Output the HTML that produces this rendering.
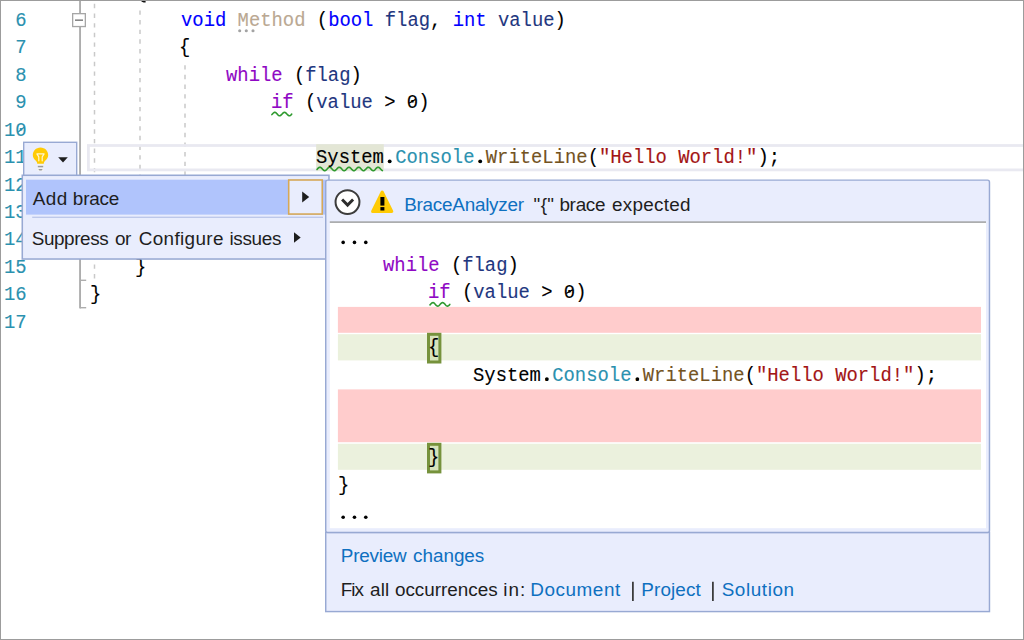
<!DOCTYPE html>
<html>
<head>
<meta charset="utf-8">
<title>Add brace</title>
<style>
html,body{margin:0;padding:0;}
body{width:1024px;height:640px;position:relative;overflow:hidden;background:#fff;font-family:"Liberation Sans",sans-serif;}
.abs{position:absolute;}
svg.layer{position:absolute;left:0;top:0;}
.mono{font-family:"Liberation Mono",monospace;font-size:20.5px;line-height:27px;white-space:pre;color:#000;transform:scaleX(0.9199);transform-origin:0 0;-webkit-text-stroke:0.12px currentColor;}
.ln{position:absolute;left:0;width:26.6px;text-align:right;color:#2b91af;height:27px;transform-origin:100% 0;}
.cl{position:absolute;height:27px;}
.kw{color:#0000ff;}
.ck{color:#8f08c4;}
.ty{color:#2b91af;}
.fn{color:#74531f;}
.st{color:#a31515;}
.id{color:#1f377f;}
.fade{color:#baa892;}
.ui{font-family:"Liberation Sans",sans-serif;font-size:18.9px;color:#1e1e1e;white-space:pre;position:absolute;line-height:22px;}
.lnk{color:#0e70c0;}
</style>
</head>
<body>

<!-- editor shapes -->
<svg class="layer" width="1024" height="640" viewBox="0 0 1024 640">
<rect x="79.1" y="0" width="1.9" height="308.4" fill="#adadad"/>
<rect x="80" y="279.6" width="6.2" height="1.4" fill="#adadad"/>
<rect x="80" y="307" width="6.2" height="1.4" fill="#adadad"/>
<rect x="72.65" y="13.65" width="12.7" height="12.9" fill="#fff" stroke="#a6a6a6" stroke-width="1.3"/>
<rect x="75" y="19.5" width="8" height="1.3" fill="#6a6a6a"/>
<line x1="94.5" y1="3.85" x2="94.5" y2="279.5" stroke="#c9c9c9" stroke-width="1.5" stroke-dasharray="4.4 5.25"/>
<line x1="140" y1="10.4" x2="140" y2="259" stroke="#c9c9c9" stroke-width="1.5" stroke-dasharray="4.4 5.25"/>
<line x1="185" y1="65.2" x2="185" y2="259" stroke="#c9c9c9" stroke-width="1.5" stroke-dasharray="4.4 5.25"/>
<rect x="88.4" y="145.5" width="940.2" height="24.4" fill="none" stroke="#e9e9f1" stroke-width="2.8"/>
<rect x="316.15" y="144.2" width="67.65" height="26.55" fill="#e3e6d5"/>
<path d="M141.3 -2 Q141.3 1.6 145.6 1.6" fill="none" stroke="#111" stroke-width="2"/>
<circle cx="239.7" cy="30.8" r="1.55" fill="#a3a3a3"/>
<circle cx="246.3" cy="30.8" r="1.55" fill="#a3a3a3"/>
<circle cx="253" cy="30.8" r="1.55" fill="#a3a3a3"/>
<path d="M271.90 114.58 L272.50 113.91 L273.10 113.26 L273.70 112.73 L274.30 112.39 L274.90 112.30 L275.50 112.48 L276.10 112.88 L276.70 113.47 L277.30 114.13 L277.90 114.79 L278.50 115.34 L279.10 115.69 L279.70 115.80 L280.30 115.65 L280.90 115.26 L281.50 114.69 L282.10 114.02 L282.70 113.36 L283.30 112.80 L283.90 112.43 L284.50 112.30 L285.10 112.43 L285.70 112.80 L286.30 113.36 L286.90 114.02 L287.50 114.69 L288.10 115.26 L288.70 115.65 L289.30 115.80 L289.90 115.69 L290.50 115.34 L291.10 114.79 L291.70 114.13" fill="none" stroke="#2f9a2f" stroke-width="1.6" stroke-linecap="round" stroke-linejoin="round"/>
<line x1="409" y1="103.2" x2="415.7" y2="99.3" stroke="#000" stroke-width="1.3"/>
<path d="M317.00 169.48 L317.60 168.81 L318.20 168.16 L318.80 167.63 L319.40 167.29 L320.00 167.20 L320.60 167.38 L321.20 167.78 L321.80 168.37 L322.40 169.03 L323.00 169.69 L323.60 170.24 L324.20 170.59 L324.80 170.70 L325.40 170.55 L326.00 170.16 L326.60 169.59 L327.20 168.92 L327.80 168.26 L328.40 167.70 L329.00 167.33 L329.60 167.20 L330.20 167.33 L330.80 167.70 L331.40 168.26 L332.00 168.92 L332.60 169.59 L333.20 170.16 L333.80 170.55 L334.40 170.70 L335.00 170.59 L335.60 170.24 L336.20 169.69 L336.80 169.03 L337.40 168.37 L338.00 167.78 L338.60 167.38 L339.20 167.20 L339.80 167.29 L340.40 167.63 L341.00 168.16 L341.60 168.81 L342.20 169.48 L342.80 170.07 L343.40 170.50 L344.00 170.69 L344.60 170.63 L345.20 170.31 L345.80 169.79 L346.40 169.15 L347.00 168.47 L347.60 167.87 L348.20 167.43 L348.80 167.21 L349.40 167.26 L350.00 167.55 L350.60 168.06 L351.20 168.70 L351.80 169.37 L352.40 169.98 L353.00 170.44 L353.60 170.68 L354.20 170.66 L354.80 170.38 L355.40 169.89 L356.00 169.26 L356.60 168.58 L357.20 167.96 L357.80 167.49 L358.40 167.23 L359.00 167.23 L359.60 167.49 L360.20 167.96 L360.80 168.58 L361.40 169.26 L362.00 169.89 L362.60 170.38 L363.20 170.66 L363.80 170.68 L364.40 170.44 L365.00 169.98 L365.60 169.37 L366.20 168.70 L366.80 168.06 L367.40 167.55 L368.00 167.26 L368.60 167.21 L369.20 167.43 L369.80 167.87 L370.40 168.47 L371.00 169.15 L371.60 169.79 L372.20 170.31 L372.80 170.63 L373.40 170.69 L374.00 170.50 L374.60 170.07 L375.20 169.48 L375.80 168.81 L376.40 168.16 L377.00 167.63 L377.60 167.29 L378.20 167.20 L378.80 167.38 L379.40 167.78 L380.00 168.37 L380.60 169.03 L381.20 169.69 L381.80 170.24 L382.40 170.59" fill="none" stroke="#2f9a2f" stroke-width="1.6" stroke-linecap="round" stroke-linejoin="round"/>
<circle cx="389.7" cy="161.3" r="1.85" fill="#000"/>
<circle cx="480.2" cy="161.3" r="1.85" fill="#000"/>
</svg>

<!-- line numbers -->
<div class="mono ln" style="top:6.83px">6</div>
<div class="mono ln" style="top:34.28px">7</div>
<div class="mono ln" style="top:61.73px">8</div>
<div class="mono ln" style="top:89.18px">9</div>
<div class="mono ln" style="top:116.63px">10</div>
<div class="mono ln" style="top:144.08px">11</div>
<div class="mono ln" style="top:171.53px">12</div>
<div class="mono ln" style="top:198.98px">13</div>
<div class="mono ln" style="top:226.43px">14</div>
<div class="mono ln" style="top:253.88px">15</div>
<div class="mono ln" style="top:281.33px">16</div>
<div class="mono ln" style="top:308.78px">17</div>

<!-- code -->
<div class="mono cl" style="left:180.5px;top:6.83px"><span class="kw">void</span> <span class="fade">Method</span> (<span class="kw">bool</span> <span class="id">flag</span>, <span class="kw">int</span> <span class="id">value</span>)</div>
<div class="mono cl" style="left:179px;top:34.28px">{</div>
<div class="mono cl" style="left:225.76px;top:61.73px"><span class="ck">while</span> (<span class="id">flag</span>)</div>
<div class="mono cl" style="left:271.02px;top:89.18px"><span class="ck">if</span> (<span class="id">value</span> &gt; 0)</div>
<div class="mono cl" style="left:316.28px;top:144.08px">System.<span class="ty">Console</span>.<span class="fn">WriteLine</span>(<span class="st">"Hello World!"</span>);</div>
<div class="mono cl" style="left:135.24px;top:253.88px">}</div>
<div class="mono cl" style="left:89.98px;top:281.33px">}</div>

<!-- popup shapes: lightbulb button, menu, preview panel -->
<svg class="layer" width="1024" height="640" viewBox="0 0 1024 640">
<line x1="17.9" y1="132.3" x2="24.4" y2="127" stroke="#2b91af" stroke-width="1.3"/>
<rect x="23.7" y="142.29999999999998" width="53.0" height="35.0" fill="#e9edfd" stroke="#98a9d3" stroke-width="1.4"/>
<rect x="22.275" y="175.275" width="306.7" height="83.75" fill="#e9edfd" stroke="#98a9d3" stroke-width="1.55"/>
<rect x="26" y="179.7" width="300" height="34.9" fill="#b0c4fc"/>
<rect x="288.7" y="180.0" width="33.55" height="34.05" fill="#e9edfd" stroke="#d6a858" stroke-width="1.6"/>
<rect x="32.2" y="216.6" width="290.8" height="1.4" fill="#bdc8ea"/>
<path d="M302.2 191.6 L309.2 197.1 L302.2 202.6 Z" fill="#1e1e1e"/>
<path d="M294 232.3 L300.7 237.5 L294 242.7 Z" fill="#1e1e1e"/>
<g transform="translate(31,146)">
  <rect x="6.5" y="17.5" width="6" height="7.6" fill="#f3f3f3"/>
  <path d="M9.5 1.4 C4.9 1.4 1.8 5 1.8 9 C1.8 11.6 3.2 13.2 4.6 14.6 C5.6 15.6 6.2 16.5 6.2 17.8 L12.8 17.8 C12.8 16.5 13.4 15.6 14.4 14.6 C15.8 13.2 17.2 11.6 17.2 9 C17.2 5 14.1 1.4 9.5 1.4 Z" fill="#ffcb05"/>
  <path d="M7.8 14.8 L7.8 10.8 L5.9 7.9 L13.1 7.9 L11.2 10.8 L11.2 14.8" fill="none" stroke="#fff6d2" stroke-width="1.2" stroke-linecap="round" stroke-linejoin="round"/>
  <rect x="6.8" y="19.8" width="5.4" height="1.5" fill="#9a9a9a"/>
  <path d="M7.4 23 L11.6 23 L10.6 24.5 L8.4 24.5 Z" fill="#9a9a9a"/>
</g>
<path d="M58.2 157.3 L67.8 157.3 L63 162.5 Z" fill="#1e1e1e"/>
<rect x="325.725" y="532.4250000000001" width="663.75" height="79.15" fill="#e9edfd" stroke="#98a9d3" stroke-width="1.45"/>
<rect x="325.725" y="180.125" width="663.75" height="352.35" fill="#e9edfd" stroke="#98a9d3" stroke-width="1.45" rx="2"/>
<rect x="329.8" y="221.4" width="656.2" height="1.5" fill="#9c9c9c"/>
<rect x="329.8" y="222.9" width="656.2" height="305.3" fill="#fff"/>
<circle cx="347.5" cy="202.1" r="11.95" fill="#fff" stroke="#3c3c3c" stroke-width="2"/>
<path d="M342.1 199.4 L347.6 205.1 L353.1 199.4" fill="none" stroke="#2d2d2d" stroke-width="2.9"/>
<path d="M382.2 192 L391.8 211.5 L372.6 211.5 Z" fill="#ffcb05" stroke="#ffcb05" stroke-width="3" stroke-linejoin="round"/>
<rect x="380.4" y="197" width="4.0" height="8.6" fill="#000"/>
<rect x="380.4" y="207.1" width="4.0" height="3.4" fill="#000"/>
<rect x="337.9" y="306.9" width="643.1" height="25.9" fill="#ffcccc"/>
<rect x="337.9" y="334.2" width="643.1" height="26.2" fill="#ebf1dd"/>
<rect x="337.9" y="389.4" width="643.1" height="52.8" fill="#ffcccc"/>
<rect x="337.9" y="443.75" width="643.1" height="26.05" fill="#ebf1dd"/>
<rect x="428.5" y="334.3" width="11.4" height="27.7" fill="#d7e3bc" stroke="#76923c" stroke-width="3"/>
<rect x="428.5" y="444.3" width="11.4" height="27.6" fill="#d7e3bc" stroke="#76923c" stroke-width="3"/>
<circle cx="343.16" cy="242.40" r="1.8" fill="#000"/><circle cx="354.48" cy="242.40" r="1.8" fill="#000"/><circle cx="365.79" cy="242.40" r="1.8" fill="#000"/>
<circle cx="343.16" cy="517.20" r="1.8" fill="#000"/><circle cx="354.48" cy="517.20" r="1.8" fill="#000"/><circle cx="365.79" cy="517.20" r="1.8" fill="#000"/>
<circle cx="546.9" cy="379.1" r="1.85" fill="#000"/>
<circle cx="637.4" cy="379.1" r="1.85" fill="#000"/>
<path d="M430.00 304.88 L430.60 304.21 L431.20 303.56 L431.80 303.03 L432.40 302.69 L433.00 302.60 L433.60 302.78 L434.20 303.18 L434.80 303.77 L435.40 304.43 L436.00 305.09 L436.60 305.64 L437.20 305.99 L437.80 306.10 L438.40 305.95 L439.00 305.56 L439.60 304.99 L440.20 304.32 L440.80 303.66 L441.40 303.10 L442.00 302.73 L442.60 302.60 L443.20 302.73 L443.80 303.10 L444.40 303.66 L445.00 304.32 L445.60 304.99 L446.20 305.56 L446.80 305.95 L447.40 306.10 L448.00 305.99 L448.60 305.64 L449.20 305.09 L449.80 304.43" fill="none" stroke="#2f9a2f" stroke-width="1.6" stroke-linecap="round" stroke-linejoin="round"/>
<line x1="632.9" y1="581.7" x2="632.9" y2="601" stroke="#333" stroke-width="1.7"/>
<line x1="712.9" y1="581.7" x2="712.9" y2="601" stroke="#333" stroke-width="1.7"/>
<line x1="566.2" y1="293.5" x2="572.9" y2="289.6" stroke="#000" stroke-width="1.3"/>
</svg>

<!-- menu text -->
<div class="ui" style="left:32.7px;top:187.9px;letter-spacing:0.47px;">Add</div>
<div class="ui" style="left:72.8px;top:187.9px;letter-spacing:-0.17px;">brace</div>
<div class="ui" style="left:31.8px;top:228.4px;letter-spacing:-0.43px;">Suppress</div>
<div class="ui" style="left:115.0px;top:228.4px;letter-spacing:-0.42px;">or</div>
<div class="ui" style="left:138.7px;top:228.4px;letter-spacing:0.36px;">Configure</div>
<div class="ui" style="left:229.4px;top:228.4px;letter-spacing:-0.3px;">issues</div>

<!-- preview header text -->
<div class="ui lnk" style="left:404.2px;top:194.2px;letter-spacing:-0.25px;">BraceAnalyzer</div>
<div class="ui" style="left:533.6px;top:194.2px;letter-spacing:0.34px;">"{"</div>
<div class="ui" style="left:559.4px;top:194.2px;letter-spacing:-0.28px;">brace</div>
<div class="ui" style="left:612.0px;top:194.2px;letter-spacing:0.25px;">expected</div>

<!-- preview code -->
<div class="mono cl" style="left:382.96px;top:252.03px"><span class="ck">while</span> (<span class="id">flag</span>)</div>
<div class="mono cl" style="left:428.22px;top:279.48px"><span class="ck">if</span> (<span class="id">value</span> &gt; 0)</div>
<div class="mono cl" style="left:428.22px;top:334.38px">{</div>
<div class="mono cl" style="left:473.48px;top:361.83px">System.<span class="ty">Console</span>.<span class="fn">WriteLine</span>(<span class="st">"Hello World!"</span>);</div>
<div class="mono cl" style="left:428.22px;top:444.18px">}</div>
<div class="mono cl" style="left:337.7px;top:471.63px">}</div>

<!-- footer -->
<div class="ui lnk" style="left:340.8px;top:545.3px;letter-spacing:-0.23px;">Preview</div>
<div class="ui lnk" style="left:413.0px;top:545.3px;letter-spacing:-0.02px;">changes</div>
<div class="ui" style="left:340.8px;top:579px;letter-spacing:-1.0px;">Fix</div>
<div class="ui" style="left:370.1px;top:579px;letter-spacing:0.14px;">all</div>
<div class="ui" style="left:394.9px;top:579px;letter-spacing:-0.02px;">occurrences</div>
<div class="ui" style="left:503.3px;top:579px;letter-spacing:1.06px;">in:</div>
<div class="ui lnk" style="left:530.2px;top:579px;letter-spacing:0.56px;">Document</div>
<div class="ui lnk" style="left:641.3px;top:579px;letter-spacing:0.11px;">Project</div>
<div class="ui lnk" style="left:721.7px;top:579px;letter-spacing:0.58px;">Solution</div>

<!-- outer image frame -->
<svg class="layer" width="1024" height="640" viewBox="0 0 1024 640"><rect x="0.5" y="0.5" width="1023" height="639" fill="none" stroke="#9c9c9c" stroke-width="1"/></svg>
</body>
</html>
